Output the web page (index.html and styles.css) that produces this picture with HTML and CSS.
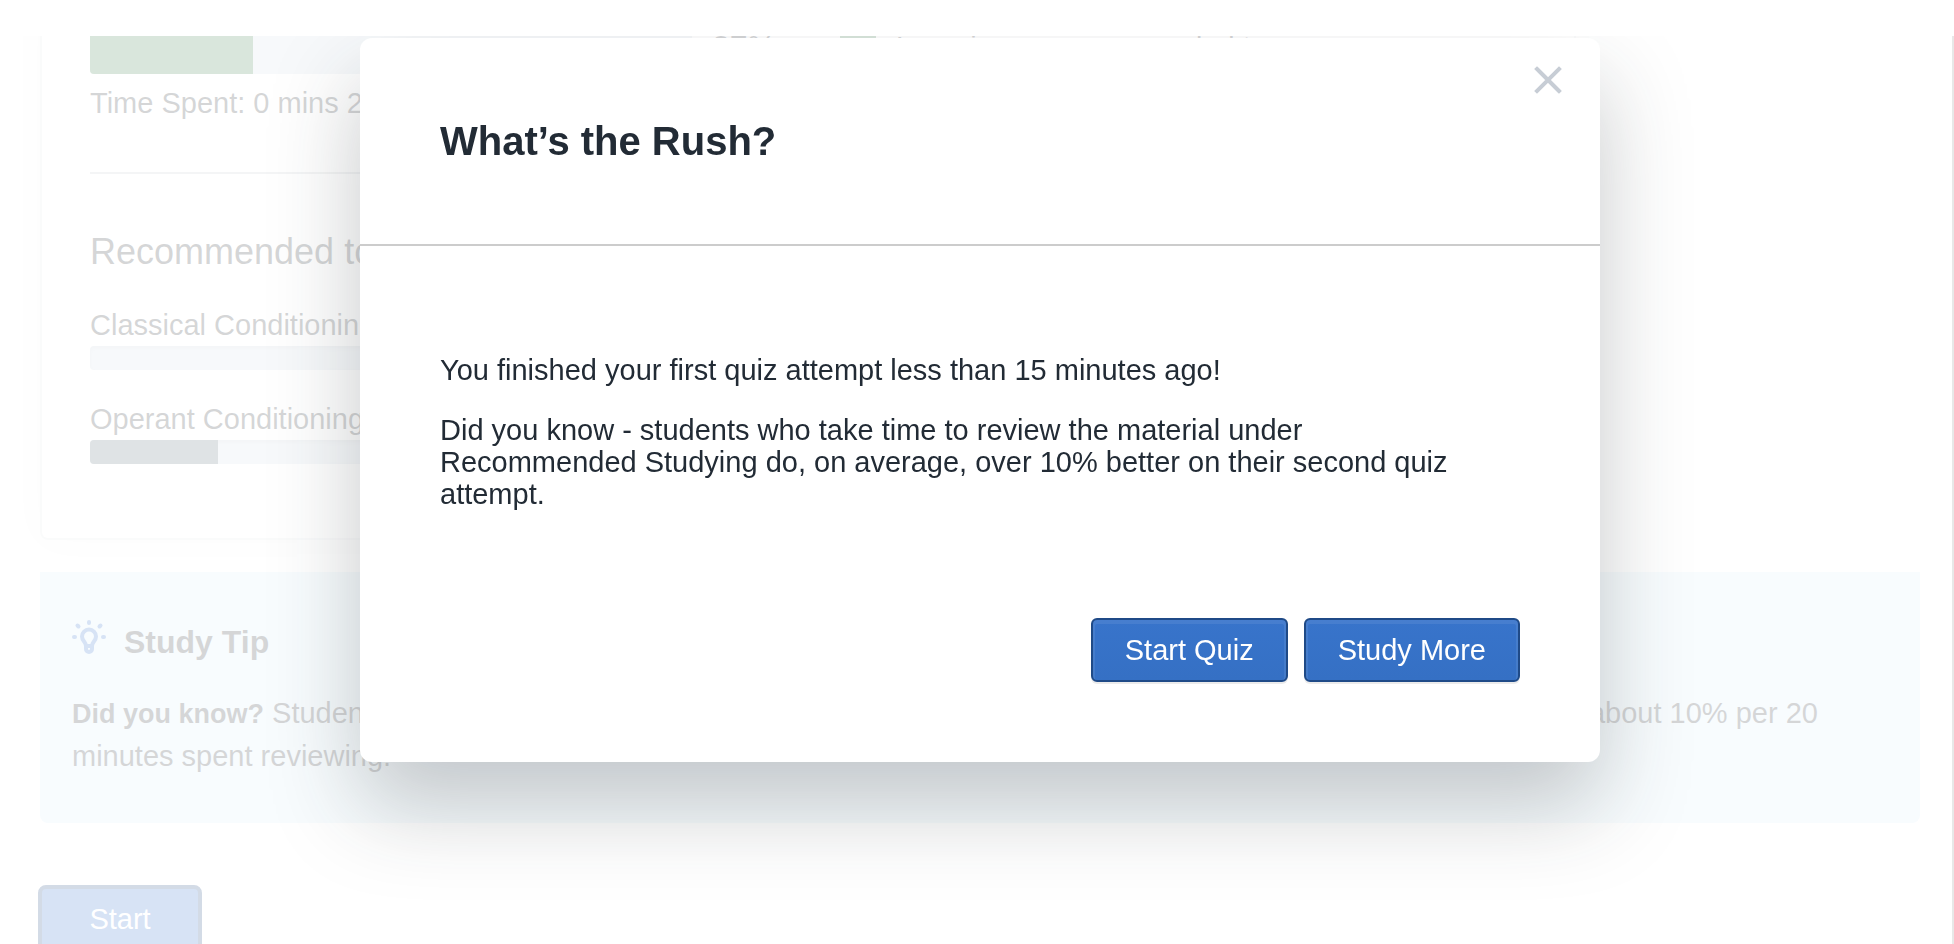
FILE: index.html
```html
<!DOCTYPE html>
<html lang="en">
<head>
    <meta charset="UTF-8">
    <meta name="viewport" content="width=device-width, initial-scale=1.0">
    <title>Study Plan</title>
    <link rel="stylesheet" href="styles.css">
</head>
<body>
    <main class="page">
        <section class="card">
            <div class="score-row">
                <div class="bar bar-large"><div class="bar-fill passed" style="width: 27%"></div></div>
                <span class="score">27%</span>
                <span class="swatch"></span>
                <span class="legend">Learning progress needed to pass</span>
            </div>
            <p class="time-spent">Time Spent: 0 mins 20 secs</p>
            <hr>
            <h2>Recommended to Study</h2>
            <div class="topic">
                <p>Classical Conditioning</p>
                <div class="bar"></div>
            </div>
            <div class="topic">
                <p>Operant Conditioning</p>
                <div class="bar"><div class="bar-fill" style="width: 21.3%"></div></div>
            </div>
        </section>

        <section class="tip">
            <div class="tip-title">
                <svg class="bulb" viewBox="0 0 34 34" fill="none" stroke="currentColor" stroke-width="4" stroke-linecap="round" stroke-linejoin="round">
                    <path d="M14 26c0-4-4-5-4-9.500a7 7 0 0 1 14 0c0 4.500-4 5.500-4 9.500v3a3 3 0 0 1-6 0z"/>
                    <path d="M14 26h6"/>
                    <path d="M17 2v1M5.500 5.500l1 1M28.500 5.500l-1 1M2 17h1M31 17h1"/>
                </svg>
                <h3>Study Tip</h3>
            </div>
            <p><strong>Did you know?</strong> Students who review the recommended material before taking the second quiz improve their marks by about 10% per 20 minutes spent reviewing.</p>
        </section>

        <button type="button" class="start">Start</button>
    </main>

    <div class="overlay">
        <div class="modal" role="dialog" aria-labelledby="modalTitle">
            <button type="button" class="close" aria-label="Close">
                <svg viewBox="0 0 28 28" stroke="currentColor" stroke-width="4" stroke-linecap="square">
                    <path d="M3 3l22 22M25 3L3 25"/>
                </svg>
            </button>
            <div class="modal-header"><h1 id="modalTitle">What’s the Rush?</h1></div>
            <div class="modal-body">
                <p>You finished your first quiz attempt less than 15 minutes ago!</p>
                <p>Did you know - students who take time to review the material under Recommended Studying do, on average, over 10% better on their second quiz attempt.</p>
            </div>
            <div class="modal-footer">
                <button type="button" class="btn">Start Quiz</button>
                <button type="button" class="btn">Study More</button>
            </div>
        </div>
    </div>
    <div class="top-strip"></div>
</body>
</html>
```

FILE: styles.css
```css
* {
    box-sizing: border-box;
}

body {
    margin: 0;
    height: 100vh;
    overflow: hidden;
    background-color: #fff;
    color: #2d3338;
    font-family: "Liberation Sans", Arial, sans-serif;
    font-size: 29px;
    line-height: 42px;
}

h1, h2, h3, p {
    margin: 0;
}

button {
    font-family: inherit;
    font-size: 29px;
    cursor: pointer;
}

.top-strip {
    position: fixed;
    top: 0;
    left: 0;
    right: 0;
    height: 36px;
    background-color: #fff;
}

.page {
    min-height: 100vh;
    padding: 0 32px 0 40px;
    border-right: 2px solid #8c8c8c;
}

.card {
    width: 1536px;
    max-width: 100%;
    padding: 26px 48px 74px;
    border: 2px solid #e6eaec;
    border-top: none;
    border-radius: 0 0 8px 8px;
    box-shadow: 0 0 40px rgba(0, 0, 0, 0.08);
}

.score-row {
    display: flex;
    align-items: flex-start;
    height: 48px;
}

.bar {
    width: 602px;
    height: 24px;
    background-color: #d7e1eb;
    border-radius: 4px;
    box-shadow: inset 0 2px 4px rgba(0, 0, 0, 0.1);
    overflow: hidden;
}

.bar-large {
    height: 48px;
}

.bar-fill {
    height: 100%;
    background-color: #5f737d;
}

.bar-fill.passed, .swatch {
    background-color: #418250;
}

.score {
    margin-left: 20px;
    width: 128px;
    font-size: 32px;
}

.swatch {
    width: 36px;
    height: 24px;
}

.legend {
    margin-left: 20px;
}

.time-spent {
    margin-top: 8px;
}

hr {
    height: 2px;
    margin: 48px 0 0;
    border: none;
    background-color: #c8cdd0;
}

h2 {
    margin: 54px 0 28px;
    font-size: 36px;
    font-weight: normal;
    line-height: 48px;
}

.topic + .topic {
    margin-top: 28px;
}

.tip {
    margin-top: 32px;
    padding: 48px 32px 46px;
    background-color: #d9edfa;
    border-radius: 0 0 8px 8px;
}

.tip-title {
    display: flex;
    align-items: flex-start;
    gap: 18px;
    margin-bottom: 28px;
}

.bulb {
    width: 34px;
    height: 34px;
    color: #3773cd;
}

h3 {
    font-size: 32px;
    line-height: 44px;
}

.tip strong {
    font-size: 27px;
}

.start {
    width: 164px;
    height: 68px;
    margin: 62px 0 0 -2px;
    color: #fff;
    background-color: #3773cd;
    border: 4px solid #234b82;
    border-radius: 8px;
}

.overlay {
    position: fixed;
    top: 0;
    left: 0;
    right: 0;
    bottom: 0;
    display: flex;
    align-items: flex-start;
    justify-content: center;
    padding: 38px 0 0 6px;
    background-color: rgba(255, 255, 255, 0.8);
}

.modal {
    position: relative;
    width: 1240px;
    max-width: 100%;
    background-color: #fff;
    border-radius: 12px;
    color: #222b35;
    box-shadow: 0 44px 90px rgba(40, 45, 50, 0.26);
}

.modal-header {
    padding: 78px 80px;
    border-bottom: 2px solid #ccc;
}

h1 {
    font-size: 40px;
    line-height: 50px;
}

.close {
    position: absolute;
    top: 28px;
    right: 38px;
    width: 28px;
    height: 28px;
    padding: 0;
    color: #c7cdd5;
    background: none;
    border: none;
}

.close svg {
    display: block;
}

.modal-body {
    padding: 108px 120px 0 80px;
    line-height: 32px;
}

.modal-body p + p {
    margin-top: 28px;
}

.modal-footer {
    display: flex;
    justify-content: flex-end;
    gap: 16px;
    padding: 108px 80px 80px;
}

.btn {
    height: 64px;
    padding: 0 32px;
    color: #fff;
    background: linear-gradient(#3874cb, #3570c4);
    border: 2px solid #1f4a87;
    border-radius: 6px;
    box-shadow: inset 0 2px 0 2px rgba(255, 255, 255, 0.08), 0 2px 0 rgba(0, 0, 0, 0.08);
}
```
